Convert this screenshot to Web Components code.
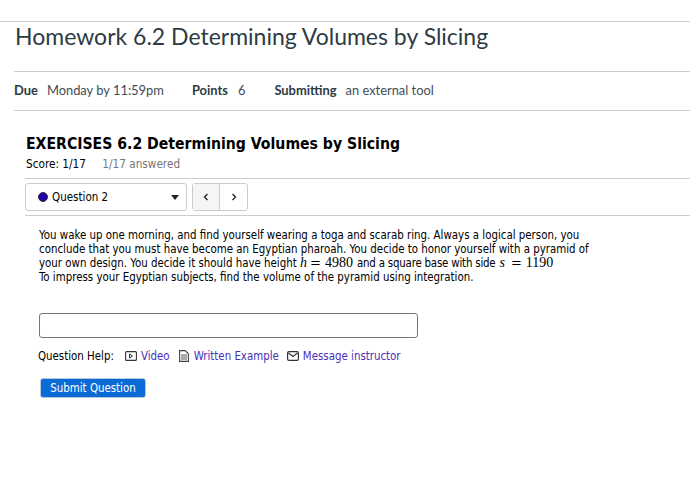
<!DOCTYPE html>
<html>
<head>
<meta charset="utf-8">
<title>Homework 6.2</title>
<style>
    html, body { margin: 0; padding: 0; background: #fff; }
    body { height: 494px; overflow: hidden; }
</style>
</head>
<body>
<assignment-page></assignment-page>
<script>
const BODY_FONT = '"DejaVu Sans Condensed", "DejaVu Sans", sans-serif';

class AssignmentHeader extends HTMLElement {
    constructor() {
        super();
        this.attachShadow({ mode: 'open' });
        this.shadowRoot.innerHTML = `
        <style>
            :host { display: block; font-family: Lato, sans-serif; color: #2d3b45; padding-top: 21px; }
            .top { border-top: 1px solid #c7cdd1; height: 49px; }
            h1 { margin: 0; padding-left: 15px; font-size: 23px; font-weight: 400; line-height: 29px; }
            .details { margin-left: 14px; border-top: 1px solid #c7cdd1; border-bottom: 1px solid #c7cdd1; height: 36px; display: flex; align-items: center; padding-bottom: 2px; font-size: 12.9px; }
            b { font-weight: 700; margin-right: 9px; }
            span { margin-right: 28px; color: #3f4d57; }
            .pts { margin-left: 1px; margin-right: 29px; }
        </style>
        <div class="top"><h1>Homework 6.2 Determining Volumes by Slicing</h1></div>
        <div class="details">
            <b>Due</b><span>Monday by 11:59pm</span>
            <b>Points</b><span class="pts">6</span>
            <b>Submitting</b><span>an external tool</span>
        </div>`;
    }
}

class QuestionNav extends HTMLElement {
    constructor() {
        super();
        this.attachShadow({ mode: 'open' });
        this.shadowRoot.innerHTML = `
        <style>
            :host { display: block; margin-left: 25px; height: 38px; border-top: 1px solid #ccc; border-bottom: 1px solid #ccc; box-sizing: border-box; font-family: ${BODY_FONT}; font-size: 11.5px; color: #000; }
            .row { display: flex; align-items: center; height: 36px; }
            .select { width: 162px; height: 28px; box-sizing: border-box; border: 1px solid #ccc; border-radius: 3px; display: flex; align-items: center; padding: 0 7px 0 12px; }
            .dot { width: 10px; height: 10px; border-radius: 50%; background: #2200aa; border: 1px solid #333; box-sizing: border-box; margin-right: 4px; }
            .caret { margin-left: auto; width: 0; height: 0; border: 4px solid transparent; border-top: 5px solid #222; border-bottom: 0; }
            .group { display: flex; margin-left: 5px; height: 28px; box-sizing: border-box; border: 1px solid #ccc; border-radius: 3px; }
            .group div { width: 27px; display: flex; align-items: center; justify-content: center; }
            .group div:first-child { width: 26px; background: #f5f5f5; border-right: 1px solid #ccc; }
        </style>
        <div class="row">
            <div class="select"><i class="dot"></i>Question 2<i class="caret"></i></div>
            <div class="group">
                <div><svg width="6" height="8" viewBox="0 0 6 8"><path d="M4.5 1 1.500 4l3 3" fill="none" stroke="#222" stroke-width="1.3"/></svg></div>
                <div><svg width="6" height="8" viewBox="0 0 6 8"><path d="M1.5 1l3 3-3 3" fill="none" stroke="#222" stroke-width="1.3"/></svg></div>
            </div>
        </div>`;
    }
}

class QuestionHelp extends HTMLElement {
    constructor() {
        super();
        this.attachShadow({ mode: 'open' });
        this.shadowRoot.innerHTML = `
        <style>
            :host { display: flex; align-items: center; height: 16px; margin: 10px 0 0 38px; font-family: ${BODY_FONT}; font-size: 11.4px; color: #000; }
            a { color: #4a2fb5; display: inline-flex; align-items: center; text-decoration: none; }
            svg { margin-right: 4px; }
            .lbl { margin-right: 11px; }
            a + a { margin-left: 9px; }
            a.doc svg { margin-right: 5px; }
            a.doc + a { margin-left: 8px; }
        </style>
        <span class="lbl">Question Help:</span>
        <a><svg width="12" height="10" viewBox="0 0 12 10"><rect x=".6" y=".6" width="10.8" height="8.8" rx="1" fill="none" stroke="#333" stroke-width="1.1"/><path d="M4.5 3v4l3-2z" fill="none" stroke="#333"/></svg>Video</a>
        <a class="doc"><svg width="10" height="12" viewBox="0 0 10 12"><path d="M.6.6h5.6L9.4 3.800v7.6H.6z" fill="none" stroke="#444" stroke-width="1.1"/><path d="M2 5h6M2 7h6M2 9h6" stroke="#555"/></svg>Written Example</a>
        <a><svg width="12" height="10" viewBox="0 0 12 10"><rect x=".6" y=".6" width="10.8" height="8.8" rx="1.5" fill="none" stroke="#333" stroke-width="1.2"/><path d="M1.5 2l4.5 3.5L10.500 2" fill="none" stroke="#333" stroke-width="1.2"/></svg>Message instructor</a>`;
    }
}

class SubmitButton extends HTMLElement {
    constructor() {
        super();
        this.attachShadow({ mode: 'open' });
        this.shadowRoot.innerHTML = `
        <style>
            :host { display: block; width: 106px; height: 20px; box-sizing: border-box; margin: 14px 0 0 40px; background: #0b6bd6; border: 1px solid #b9c9dc; border-radius: 3px; color: #fff; text-align: center; line-height: 18px; font-family: ${BODY_FONT}; font-size: 11.4px; }
        </style>
        <slot></slot>`;
    }
}

class ExerciseBody extends HTMLElement {
    constructor() {
        super();
        this.attachShadow({ mode: 'open' });
        this.shadowRoot.innerHTML = `
        <style>
            :host { display: block; font-family: ${BODY_FONT}; color: #000; }
            h2 { margin: 22px 0 0 26px; font-size: 15.65px; line-height: 22px; font-weight: 700; }
            .score { margin: 1px 0 6px 26px; font-size: 11.7px; line-height: 16px; }
            .score span { color: #777; margin-left: 13px; }
            .text { margin: 12px 0 0 39px; white-space: nowrap; font-size: 11.4px; line-height: 14px; height: 56px; }
            .m { font-family: "Liberation Serif", serif; font-size: 14px; line-height: 1; margin-right: 1px; }
            .m em { margin: 0 4px 0 3px; font-style: normal; font-family: "DejaVu Sans", sans-serif; font-size: 13px; }
            .m.side { margin-left: 1px; }
            .m.side em { margin-left: 6px; }
            .tight { letter-spacing: -0.2px; }
            .input { margin: 29px 0 0 39px; width: 379px; height: 25px; box-sizing: border-box; border: 1px solid #777; border-radius: 3px; }
        </style>
        <h2>EXERCISES 6.2 Determining Volumes by Slicing</h2>
        <div class="score">Score: 1/17 <span>1/17 answered</span></div>
        <question-nav></question-nav>
        <div class="text">You wake up one morning, and find yourself wearing a toga and scarab ring. Always a logical person, you<br>conclude that you must have become an Egyptian pharoah. You decide to honor yourself with a pyramid of<br>your own design. You decide it should have height <span class="m"><i>h</i><em>=</em>4980</span><span class="tight"> and a square base with side </span><span class="m side"><i>s</i><em>=</em>1190</span><br>To impress your Egyptian subjects, find the volume of the pyramid using integration.</div>
        <div class="input"></div>
        <question-help></question-help>
        <submit-button>Submit Question</submit-button>`;
    }
}

class AssignmentPage extends HTMLElement {
    constructor() {
        super();
        this.attachShadow({ mode: 'open' });
        this.shadowRoot.innerHTML = `
        <style>:host { display: block; }</style>
        <assignment-header></assignment-header>
        <exercise-body></exercise-body>`;
    }
}

customElements.define('assignment-header', AssignmentHeader);
customElements.define('question-nav', QuestionNav);
customElements.define('question-help', QuestionHelp);
customElements.define('submit-button', SubmitButton);
customElements.define('exercise-body', ExerciseBody);
customElements.define('assignment-page', AssignmentPage);
</script>
</body>
</html>
